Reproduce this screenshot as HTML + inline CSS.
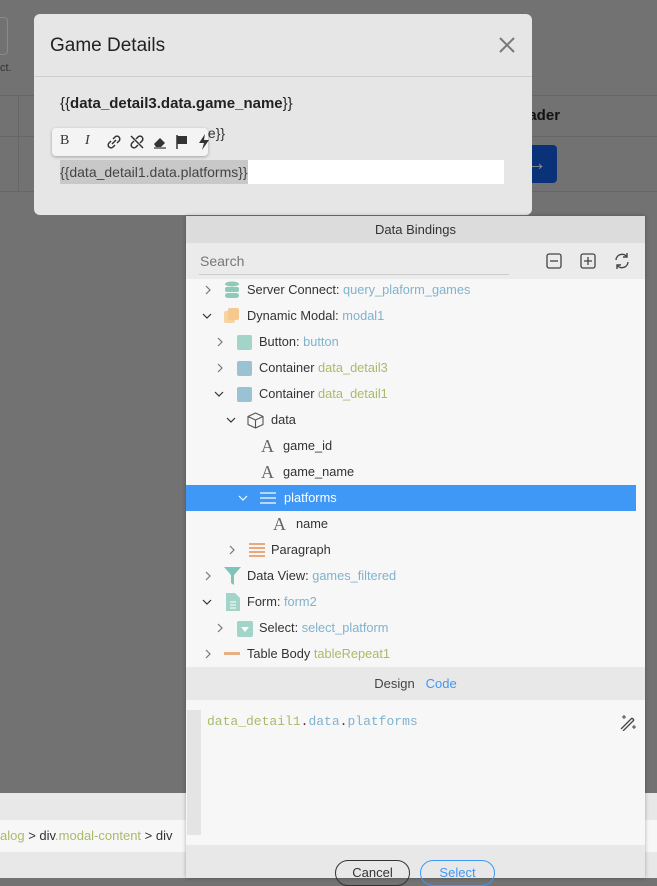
<!DOCTYPE html>
<html><head><style>
*{margin:0;padding:0;box-sizing:border-box}
body{width:657px;height:878px;overflow:hidden;background:#727272;font-family:"Liberation Sans",sans-serif;position:relative;color:#222}
.abs{position:absolute}
.row{position:absolute;left:0;right:0;height:26px;font-size:12.8px;line-height:26px;color:#333}
.row span.v{color:#7fb3cf}
.row span.g{color:#a8bb6a}
.chev{position:absolute;top:8px;width:10px;height:10px}
.ic{position:absolute;top:6px;width:14px;height:14px}
</style></head><body>
<div class="abs" style="left:-6px;top:17px;width:14px;height:38px;border:1px solid #8a8a8a;border-radius:4px"></div>
<div class="abs" style="left:0;top:62px;font-size:11px;color:#333">ct.</div>
<div class="abs" style="left:0;top:95px;width:657px;height:1px;background:#666"></div>
<div class="abs" style="left:0;top:136px;width:657px;height:1px;background:#666"></div>
<div class="abs" style="left:0;top:191px;width:657px;height:1px;background:#666"></div>
<div class="abs" style="left:18px;top:96px;width:1px;height:95px;background:#666"></div>
<div class="abs" style="left:520px;top:107px;font-size:15px;font-weight:bold;color:#111">eader</div>
<div class="abs" style="left:515px;top:145px;width:42px;height:38px;background:#0a3278;border-radius:4px;color:#8a8a8a;font-size:22px;line-height:36px;text-align:right;padding-right:10px;font-weight:bold">→</div>
<div class="abs" style="left:0;top:793px;width:657px;height:27px;background:#e8e8e8"></div>
<div class="abs" style="left:0;top:820px;width:657px;height:32px;background:#f7f7f7;font-size:13px;line-height:32px;color:#333;white-space:nowrap"><span style="color:#a8bb6a">alog</span> &gt; div<span style="color:#a8bb6a">.modal-content</span> &gt; div</div>
<div class="abs" style="left:0;top:852px;width:657px;height:26px;background:#e8e8e8"></div>

<div class="abs" style="left:34px;top:14px;width:498px;height:201px;background:#e6e6e6;border-radius:6px">
  <div class="abs" style="left:16px;top:21px;font-size:19px;color:#222">Game Details</div>
  <svg class="abs" style="left:464px;top:22px" width="18" height="18"><path d="M2 2L16 16M16 2L2 16" stroke="#777" stroke-width="2"/></svg>
  <div class="abs" style="left:0;top:62px;width:498px;height:1px;background:#cdcdd3"></div>
  <div class="abs" style="left:26px;top:81px;font-size:15px;color:#222">{{<b>data_detail3.data.game_name</b>}}</div>
  <div class="abs" style="left:26px;top:111px;font-size:14px;color:#333">{{data_detail3.data.game}}</div>
  <div class="abs" style="left:18px;top:114px;width:156px;height:28px;background:#f4f4f4;border-radius:4px;box-shadow:0 1px 3px rgba(0,0,0,.3);font-size:14px;color:#333">
    <span class="abs" style="left:8px;top:5px;font-family:'Liberation Serif',serif">B</span>
    <span class="abs" style="left:33px;top:5px;font-family:'Liberation Serif',serif;font-style:italic">I</span>
    <svg class="abs" style="left:54px;top:7px" width="16" height="14"><path d="M6 9L10 5M5 6L3 8A2.5 2.5 0 0 0 7 12L9 10M11 8L13 6A2.5 2.5 0 0 0 9 2L7 4" fill="none" stroke="#333" stroke-width="1.5"/></svg>
    <svg class="abs" style="left:77px;top:7px" width="16" height="14"><path d="M5 6L3 8A2.5 2.5 0 0 0 7 12L9 10M11 8L13 6A2.5 2.5 0 0 0 9 2L7 4M2 1L14 13" fill="none" stroke="#333" stroke-width="1.5"/></svg>
    <svg class="abs" style="left:100px;top:7px" width="16" height="14"><path d="M2 9L8 3L13 8L9 12H4Z" fill="#333"/><path d="M2 13H14" stroke="#333" stroke-width="1.2"/></svg>
    <svg class="abs" style="left:123px;top:6px" width="14" height="16"><path d="M2 1V15" stroke="#333" stroke-width="1.5"/><path d="M2 2H12V10H2Z" fill="#333"/></svg>
    <svg class="abs" style="left:146px;top:6px" width="12" height="16"><path d="M7 0L1 9H6L4 16L11 6H6Z" fill="#333"/></svg>
  </div>
  <div class="abs" style="left:26px;top:146px;width:444px;height:24px;background:#fff"></div>
  <div class="abs" style="left:26px;top:146px;height:24px;background:#c8c8c8;font-size:14px;line-height:24px;color:#444">{{data_detail1.data.platforms}}</div>
</div>

<div class="abs" style="left:186px;top:216px;width:459px;height:662px;background:#f7f7f7;box-shadow:0 0 4px rgba(0,0,0,.3)">
  <div class="abs" style="left:0;top:0;width:459px;height:27px;background:#dcdcdc;text-align:center;font-size:13px;line-height:27px;color:#333">Data Bindings</div>
  <div class="abs" style="left:0;top:27px;width:459px;height:36px;background:#ebebeb"></div>
  <div class="abs" style="left:14px;top:37px;font-size:14px;color:#777">Search</div>
  <div class="abs" style="left:13px;top:58px;width:310px;height:1px;background:#ccc"></div>
  <svg class="abs" style="left:360px;top:37px" width="16" height="16"><rect x="1" y="1" width="14" height="14" rx="2" fill="none" stroke="#444" stroke-width="1.3"/><path d="M4 8H12" stroke="#444" stroke-width="1.3"/></svg>
  <svg class="abs" style="left:394px;top:37px" width="16" height="16"><rect x="1" y="1" width="14" height="14" rx="2" fill="none" stroke="#444" stroke-width="1.3"/><path d="M4 8H12M8 4V12" stroke="#444" stroke-width="1.3"/></svg>
  <svg class="abs" style="left:427px;top:36px" width="18" height="18"><path d="M3 8A6 6 0 0 1 14 5M15 10A6 6 0 0 1 4 13" fill="none" stroke="#444" stroke-width="1.4"/><path d="M14 1V5H10M4 17V13H8" fill="none" stroke="#444" stroke-width="1.4"/></svg>

  <div class="abs" style="left:0;top:61px;width:450px;height:390px">
    <div class="row" style="top:0"><svg class="chev" style="left:17px" viewBox="0 0 10 10"><path d="M3 1L7 5L3 9" fill="none" stroke="#777" stroke-width="1.2"/></svg><svg class="ic" style="left:38px;top:4px;width:16px;height:18px"><ellipse cx="8" cy="3" rx="7" ry="2.5" fill="#8fc9b8"/><rect x="1" y="6" width="14" height="5" rx="2" fill="#8fc9b8"/><rect x="1" y="12" width="14" height="5" rx="2.5" fill="#8fc9b8"/></svg><span style="position:absolute;left:61px">Server Connect: <span class="v">query_plaform_games</span></span></div>
    <div class="row" style="top:26px"><svg class="chev" style="left:16px" viewBox="0 0 10 10"><path d="M1 3L5 7L9 3" fill="none" stroke="#333" stroke-width="1.2"/></svg><svg class="ic" style="left:37px;top:4px;width:17px;height:17px"><rect x="1" y="4" width="11" height="12" rx="2" fill="#f7d3a2"/><rect x="5" y="1" width="11" height="12" rx="2" fill="#f5c88e"/></svg><span style="position:absolute;left:61px">Dynamic Modal: <span class="v">modal1</span></span></div>
    <div class="row" style="top:52px"><svg class="chev" style="left:29px" viewBox="0 0 10 10"><path d="M3 1L7 5L3 9" fill="none" stroke="#777" stroke-width="1.2"/></svg><div class="ic" style="left:51px;width:15px;height:15px;background:#a3d4c8;border-radius:2px"></div><span style="position:absolute;left:73px">Button: <span class="v">button</span></span></div>
    <div class="row" style="top:78px"><svg class="chev" style="left:29px" viewBox="0 0 10 10"><path d="M3 1L7 5L3 9" fill="none" stroke="#777" stroke-width="1.2"/></svg><div class="ic" style="left:51px;width:15px;height:15px;background:#9bc2d2;border-radius:2px"></div><span style="position:absolute;left:73px">Container <span class="g">data_detail3</span></span></div>
    <div class="row" style="top:104px"><svg class="chev" style="left:28px" viewBox="0 0 10 10"><path d="M1 3L5 7L9 3" fill="none" stroke="#333" stroke-width="1.2"/></svg><div class="ic" style="left:51px;width:15px;height:15px;background:#9bc2d2;border-radius:2px"></div><span style="position:absolute;left:73px">Container <span class="g">data_detail1</span></span></div>
    <div class="row" style="top:130px"><svg class="chev" style="left:40px" viewBox="0 0 10 10"><path d="M1 3L5 7L9 3" fill="none" stroke="#333" stroke-width="1.2"/></svg><svg class="ic" style="left:61px;top:5px;width:17px;height:17px"><path d="M8.5 1L16 4.5V12.5L8.5 16L1 12.5V4.5Z M1 4.5L8.5 8L16 4.5 M8.5 8V16" fill="none" stroke="#555" stroke-width="1.1"/></svg><span style="position:absolute;left:85px">data</span></div>
    <div class="row" style="top:156px"><span style="position:absolute;left:75px;font-family:'Liberation Serif',serif;font-size:18px;color:#666">A</span><span style="position:absolute;left:97px">game_id</span></div>
    <div class="row" style="top:182px"><span style="position:absolute;left:75px;font-family:'Liberation Serif',serif;font-size:18px;color:#666">A</span><span style="position:absolute;left:97px">game_name</span></div>
    <div class="row" style="top:208px;background:#3f98f6;color:#fff"><svg class="chev" style="left:52px" viewBox="0 0 10 10"><path d="M1 3L5 7L9 3" fill="none" stroke="#fff" stroke-width="1.2"/></svg><svg class="ic" style="left:74px;top:6px;width:16px;height:14px"><path d="M0 2H16M0 7H16M0 12H16" stroke="#fff" stroke-width="1.3"/></svg><span style="position:absolute;left:98px">platforms</span></div>
    <div class="row" style="top:234px"><span style="position:absolute;left:87px;font-family:'Liberation Serif',serif;font-size:18px;color:#666">A</span><span style="position:absolute;left:110px">name</span></div>
    <div class="row" style="top:260px"><svg class="chev" style="left:41px" viewBox="0 0 10 10"><path d="M3 1L7 5L3 9" fill="none" stroke="#777" stroke-width="1.2"/></svg><svg class="ic" style="left:63px;top:5px;width:16px;height:16px"><path d="M0 2H16M0 6H16M0 10H16M0 14H16" stroke="#eaa97a" stroke-width="2"/></svg><span style="position:absolute;left:85px">Paragraph</span></div>
    <div class="row" style="top:286px"><svg class="chev" style="left:17px" viewBox="0 0 10 10"><path d="M3 1L7 5L3 9" fill="none" stroke="#777" stroke-width="1.2"/></svg><svg class="ic" style="left:38px;top:4px;width:17px;height:18px"><path d="M0 0H17L10 8V18L7 16V8Z" fill="#7fc4b8"/></svg><span style="position:absolute;left:61px">Data View: <span class="v">games_filtered</span></span></div>
    <div class="row" style="top:312px"><svg class="chev" style="left:16px" viewBox="0 0 10 10"><path d="M1 3L5 7L9 3" fill="none" stroke="#333" stroke-width="1.2"/></svg><svg class="ic" style="left:40px;top:4px;width:14px;height:18px"><path d="M0 0H9L14 5V18H0Z" fill="#a3d4c8"/><path d="M4 9H10M4 12H10M4 15H10" stroke="#fff"/></svg><span style="position:absolute;left:61px">Form: <span class="v">form2</span></span></div>
    <div class="row" style="top:338px"><svg class="chev" style="left:29px" viewBox="0 0 10 10"><path d="M3 1L7 5L3 9" fill="none" stroke="#777" stroke-width="1.2"/></svg><svg class="ic" style="left:51px;width:16px;height:16px"><rect width="16" height="16" rx="2" fill="#a3d4c8"/><path d="M4 6H12L8 11Z" fill="#fff"/></svg><span style="position:absolute;left:73px">Select: <span class="v">select_platform</span></span></div>
    <div class="row" style="top:364px"><svg class="chev" style="left:17px" viewBox="0 0 10 10"><path d="M3 1L7 5L3 9" fill="none" stroke="#777" stroke-width="1.2"/></svg><div class="ic" style="left:38px;top:11px;width:16px;height:3px;background:#e5b083"></div><span style="position:absolute;left:61px">Table Body <span class="g">tableRepeat1</span></span></div>
  </div>

  <div class="abs" style="left:0;top:451px;width:459px;height:33px;background:#e8e8e8;text-align:center;font-size:13px;line-height:33px;color:#444">Design&nbsp;&nbsp;&nbsp;<span style="color:#3f98f6">Code</span></div>
  <div class="abs" style="left:1px;top:494px;width:14px;height:125px;background:#e4e4e4"></div>
  <div class="abs" style="left:21px;top:498px;font-family:'Liberation Mono',monospace;font-size:13px;color:#a8bb6a">data_detail1<span style="color:#6b2b2b">.</span><span style="color:#7fb3cf">data</span><span style="color:#6b2b2b">.</span><span style="color:#7fb3cf">platforms</span></div>
  <svg class="abs" style="left:433px;top:497px" width="18" height="18"><path d="M2 16L13 5M4 18L15 7M13 5L15 7" stroke="#444" stroke-width="1.3" fill="none"/><path d="M5 2V6M3 4H7M15 12V16M13 14H17" stroke="#444" stroke-width="1"/></svg>
  <div class="abs" style="left:0;top:629px;width:459px;height:33px;background:#e8e8e8"></div>
  <div class="abs" style="left:149px;top:644px;width:75px;height:26px;border:1px solid #333;border-radius:13px;font-size:13px;text-align:center;line-height:24px;color:#333">Cancel</div>
  <div class="abs" style="left:234px;top:644px;width:75px;height:26px;border:1px solid #3f98f6;border-radius:13px;font-size:13px;text-align:center;line-height:24px;color:#3f98f6">Select</div>
</div>
</body></html>
